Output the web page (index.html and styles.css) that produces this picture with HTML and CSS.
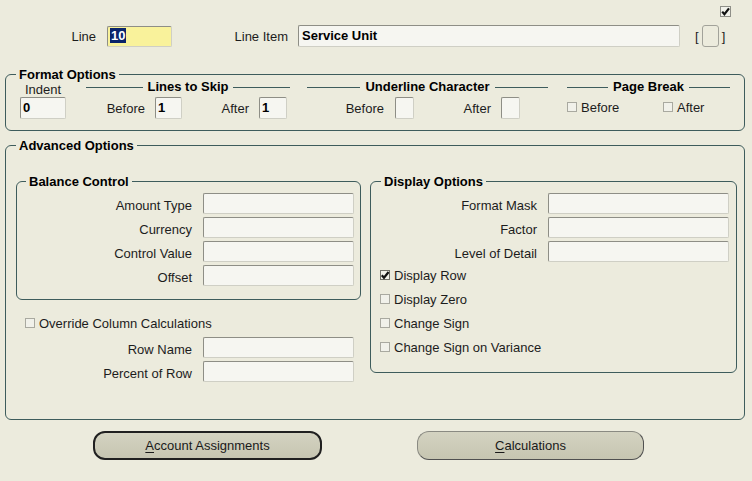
FILE: index.html
```html
<!DOCTYPE html>
<html>
<head>
<meta charset="utf-8">
<link rel="stylesheet" href="styles.css">
</head>
<body>
<div class="top">
  <span class="cb cb-top checked"><svg viewBox="0 0 11 11" width="11" height="11"><path d="M2.2 5.6 L4.4 8.2 L9 2.4" fill="none" stroke="#111" stroke-width="2.2"/></svg></span>
</div>

<div class="line-row">
  <span class="lbl lbl-line">Line</span>
  <div class="field f-line"><span class="sel">10</span></div>
  <span class="lbl lbl-item">Line Item</span>
  <div class="field f-item">Service Unit</div>
  <div class="brk">[<span class="brk-box"></span>]</div>
</div>

<div class="group fmt">
  <div class="gtitle">Format Options</div>
  <div class="fmt-body">
    <div class="col-indent">
      <div class="ind-lbl">Indent</div>
      <div class="field f-indent"><b>0</b></div>
    </div>
    <div class="skip">
      <div class="sub">Lines to Skip</div>
      <div class="pair">
        <span class="lbl s-l1">Before</span>
        <div class="field s-i1"><b>1</b></div>
        <span class="lbl s-l2">After</span>
        <div class="field s-i2"><b>1</b></div>
      </div>
    </div>
    <div class="und">
      <div class="sub">Underline Character</div>
      <div class="pair">
        <span class="lbl u-l1">Before</span>
        <div class="field u-i1"></div>
        <span class="lbl u-l2">After</span>
        <div class="field u-i2"></div>
      </div>
    </div>
    <div class="pg">
      <div class="sub">Page Break</div>
      <div class="pair">
        <div class="chk pg-c1"><span class="cb"></span><span>Before</span></div>
        <div class="chk"><span class="cb"></span><span>After</span></div>
      </div>
    </div>
  </div>
</div>

<div class="group adv">
  <div class="gtitle">Advanced Options</div>
  <div class="adv-body">
    <div class="left">
      <div class="group bal">
        <div class="gtitle t-bal">Balance Control</div>
        <div class="grid bal-grid">
          <span class="lbl glbl">Amount Type</span><div class="field"></div>
          <span class="lbl glbl">Currency</span><div class="field"></div>
          <span class="lbl glbl">Control Value</span><div class="field"></div>
          <span class="lbl glbl">Offset</span><div class="field"></div>
        </div>
      </div>
      <div class="chk ovr"><span class="cb"></span><span>Override Column Calculations</span></div>
      <div class="grid row-grid">
        <span class="lbl glbl">Row Name</span><div class="field"></div>
        <span class="lbl glbl">Percent of Row</span><div class="field"></div>
      </div>
    </div>
    <div class="group disp">
      <div class="gtitle">Display Options</div>
      <div class="grid disp-grid">
        <span class="lbl glbl">Format Mask</span><div class="field"></div>
        <span class="lbl glbl">Factor</span><div class="field"></div>
        <span class="lbl glbl">Level of Detail</span><div class="field"></div>
      </div>
      <div class="cblist">
        <div class="chk crow"><span class="cb checked dark"><svg viewBox="0 0 10 10" width="10" height="10"><path d="M1.8 5.2 L4 7.8 L8.6 2" fill="none" stroke="#111" stroke-width="2.2"/></svg></span><span>Display Row</span></div>
        <div class="chk crow"><span class="cb"></span><span>Display Zero</span></div>
        <div class="chk crow"><span class="cb"></span><span>Change Sign</span></div>
        <div class="chk crow"><span class="cb"></span><span>Change Sign on Variance</span></div>
      </div>
    </div>
  </div>
</div>

<div class="btns">
  <div class="btn btn-acc"><u>A</u>ccount Assignments</div>
  <div class="btn btn-calc"><u>C</u>alculations</div>
</div>
</body>
</html>
```

FILE: styles.css
```css
* { box-sizing: border-box; }

body {
  margin: 0;
  width: 752px;
  height: 481px;
  overflow: hidden;
  background: #ecebdd;
  font-family: "Liberation Sans", Arial, sans-serif;
  font-size: 13px;
  color: #1c1c1c;
}

.top {
  height: 17px;
  padding-top: 6px;
  padding-right: 21px;
  display: flex;
  justify-content: flex-end;
}

.cb {
  display: inline-block;
  flex: none;
  width: 10px;
  height: 10px;
  border: 1px solid #a9a9a0;
  background: #f1f1ea;
}
.cb svg { display: block; margin: -1px; }
.cb-top { width: 11px; height: 11px; border-color: #8f8f88; }
.cb.dark { border-color: #707068; }

.line-row {
  margin-top: 8px;
  height: 22px;
  display: flex;
  align-items: center;
}
.lbl { white-space: nowrap; }
.lbl-line { width: 96px; text-align: right; }
.lbl-item { width: 116px; text-align: right; }

.field {
  height: 21px;
  line-height: 19px;
  padding-left: 2px;
  border: 1px solid;
  border-color: #8e8e86 #cfcfc5 #cfcfc5 #8e8e86;
  border-radius: 2px;
  background: #f6f6f1;
  color: #000;
}
.f-line {
  margin-left: 11px;
  width: 65px;
  background: #f9f29b;
  line-height: 18px;
}
.sel {
  display: inline-block;
  background: #0a246a;
  color: #fff;
  font-weight: bold;
  padding: 0 1px;
  line-height: 15px;
  margin-top: 1px;
}
.f-item {
  margin-left: 10px;
  width: 382px;
  height: 22px;
  line-height: 20px;
  padding-left: 3px;
  font-weight: bold;
}
.brk {
  margin-left: 15px;
  display: flex;
  align-items: center;
  gap: 3px;
}
.brk-box {
  width: 17px;
  height: 22px;
  border: 1px solid #a2a29a;
  border-radius: 3px;
}

/* group boxes */
.group {
  border: 1px solid #3e5c5c;
  border-radius: 6px;
}
.gtitle {
  width: max-content;
  height: 15px;
  line-height: 15px;
  margin: -8px 0 0 10px;
  padding: 0 3px;
  background: #ecebdd;
  font-weight: bold;
  color: #000;
}

.fmt {
  margin: 27px 0 0 5px;
  width: 740px;
  padding-bottom: 11px;
}
.fmt-body {
  display: flex;
  padding-left: 14px;
}
.col-indent { width: 46px; }
.ind-lbl {
  height: 14px;
  padding-top: 2px;
  line-height: 12px;
  text-align: center;
}
.f-indent { margin-top: 1px; height: 22px; line-height: 20px; }

.sub {
  height: 10px;
  line-height: 10px;
  display: flex;
  align-items: center;
  gap: 5px;
  font-weight: bold;
  color: #000;
  white-space: nowrap;
}
.sub::before, .sub::after {
  content: "";
  flex: 1;
  height: 1px;
  background: #3e5c5c;
}
.pair {
  margin-top: 5px;
  height: 22px;
  display: flex;
  align-items: center;
}
.pair .field { height: 22px; line-height: 20px; }
.pair .lbl { text-align: right; line-height: 24px; height: 22px; }

.skip { margin-left: 20px; width: 204px; }
.s-l1 { width: 59px; }
.s-i1 { margin-left: 10px; width: 27px; }
.s-l2 { width: 67px; }
.s-i2 { margin-left: 10px; width: 28px; }

.und { margin-left: 17px; width: 241px; }
.u-l1 { width: 77px; }
.u-i1 { margin-left: 11px; width: 19px; }
.u-l2 { width: 77px; }
.u-i2 { margin-left: 10px; width: 19px; }

.pg { margin-left: 19px; width: 163px; }
.chk {
  display: flex;
  align-items: center;
  gap: 4px;
  white-space: nowrap;
}
.pg .chk { height: 22px; line-height: 24px; }
.pg .chk .cb { margin-top: -2px; }
.pg-c1 { width: 96px; }

/* advanced */
.adv {
  margin: 14px 0 0 5px;
  width: 740px;
}
.adv-body {
  display: flex;
  align-items: flex-start;
  gap: 9px;
  padding: 28px 0 37px 10px;
}
.left { width: 345px; }
.bal { width: 345px; padding-bottom: 13px; }
.t-bal { margin-left: 9px; }

.grid {
  display: grid;
  grid-auto-rows: 21px;
  row-gap: 3px;
  column-gap: 11px;
}
.glbl {
  text-align: right;
  height: 21px;
  line-height: 25px;
}
.bal-grid {
  margin-top: 4px;
  grid-template-columns: 175px 151px;
}
.ovr {
  margin-top: 12px;
  height: 24px;
  padding-left: 9px;
  line-height: 26px;
}
.ovr .cb { margin-top: -3px; }
.row-grid {
  margin-top: 1px;
  padding-left: 1px;
  grid-template-columns: 175px 151px;
}

.disp { width: 367px; padding-bottom: 12px; }
.disp-grid {
  margin-top: 4px;
  grid-template-columns: 166px 181px;
}
.cblist { margin-top: 2px; padding-left: 9px; }
.crow { height: 24px; line-height: 26px; }
.crow .cb { margin-top: -3px; }

/* buttons */
.btns {
  margin-top: 11px;
  display: flex;
  gap: 95px;
  padding-left: 93px;
}
.btn {
  height: 29px;
  border-radius: 12px;
  text-align: center;
  color: #1a1a1a;
  background: linear-gradient(#d4d3c1, #c6c5b1);
}
.btn u { text-decoration: underline; text-underline-offset: 2px; }
.btn-acc {
  width: 229px;
  border: 2px solid #202020;
  line-height: 26px;
}
.btn-calc {
  width: 227px;
  border: 1px solid #505050;
  border-top-color: #8a8a82;
  border-left-color: #8a8a82;
  line-height: 28px;
}
```
